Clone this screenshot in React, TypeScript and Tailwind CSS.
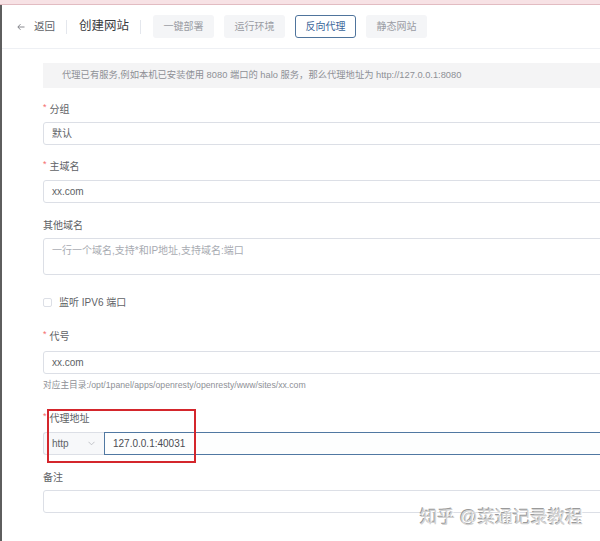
import React from 'react';

const FONT = '"Liberation Sans", "Noto Sans CJK SC", sans-serif';

const Label = ({ text, required, className = '' }: { text: string; required?: boolean; className?: string }) => (
    <div className={`h-[20px] flex items-center text-[10px] text-[#606266] ${className}`}>
        {required && <span className="text-[#f56c6c] text-[9px] mr-[3px] -mt-[2px]">*</span>}
        <span>{text}</span>
    </div>
);

const TextInput = ({ value, className = '' }: { value?: string; className?: string }) => (
    <div className={`h-[23px] w-[600px] border border-[#dcdfe6] rounded-[3px] flex items-center pl-[8px] text-[10px] text-[#606266] ${className}`}>
        {value}
    </div>
);

const TabButton = ({ text, active }: { text: string; active?: boolean }) => (
    <div
        className={`h-[23px] w-[61px] rounded-[3px] flex items-center justify-center text-[10px] ${
            active ? 'border border-[#4f749c] text-[#3a659a] bg-white' : 'bg-[#f4f5f7] text-[#9a9ca3]'
        }`}
    >
        {text}
    </div>
);

export default function App() {
    return (
        <div className="relative w-[600px] h-[541px] overflow-hidden bg-white flex flex-col" style={{ fontFamily: FONT }}>
            {/* browser top strip */}
            <div className="h-[5px] bg-[#f7e2e5] border-b border-[#e2bcc2] shrink-0" />

            <div className="flex flex-1">
                <div className="w-[2px] bg-[#5e5e5e] shrink-0" />

                <div className="flex-1 flex flex-col">
                    {/* header */}
                    <div className="h-[44px] flex items-center border-b border-[#eef0f4] pl-[15px]">
                        <svg width="8" height="8" viewBox="0 0 8 8" className="text-[#7a7c82]">
                            <path d="M7.5 4H1M3.5 1.2L0.8 4L3.5 6.8" stroke="currentColor" strokeWidth="0.9" fill="none" />
                        </svg>
                        <span className="ml-[9px] text-[10.5px] text-[#606266]">返回</span>
                        <div className="ml-[11px] w-px h-[14px] bg-[#e4e7ed]" />
                        <span className="ml-[12px] text-[12.5px] text-[#3a3b3f]">创建网站</span>
                        <div className="ml-[11px] w-px h-[14px] bg-[#e4e7ed]" />
                        <div className="ml-[12px] flex gap-[10px]">
                            <TabButton text="一键部署" />
                            <TabButton text="运行环境" />
                            <TabButton text="反向代理" active />
                            <TabButton text="静态网站" />
                        </div>
                    </div>

                    {/* form */}
                    <div className="pl-[41px] flex flex-col">
                        <div className="mt-[14px] h-[25px] w-[600px] bg-[#f4f4f5] flex items-center pl-[19px] text-[9.3px] text-[#8e9096]">
                            代理已有服务,例如本机已安装使用 8080 端口的 halo 服务，那么代理地址为 http://127.0.0.1:8080
                        </div>

                        <Label text="分组" required className="mt-[11px]" />
                        <TextInput value="默认" className="mt-[3px]" />

                        <Label text="主域名" required className="mt-[11px]" />
                        <TextInput value="xx.com" className="mt-[4px]" />

                        <Label text="其他域名" className="mt-[12px]" />
                        <div className="mt-[3px] h-[37px] w-[600px] border border-[#dcdfe6] rounded-[3px] pl-[8px] pt-[4px] text-[10px] text-[#a8abb2]">
                            一行一个域名,支持*和IP地址,支持域名:端口
                        </div>

                        <div className="mt-[17px] h-[20px] flex items-center">
                            <div className="w-[9px] h-[9px] border border-[#dcdfe6] rounded-[2px]" />
                            <span className="ml-[7px] text-[10px] text-[#606266]">监听 IPV6 端口</span>
                        </div>

                        <Label text="代号" required className="mt-[14px]" />
                        <TextInput value="xx.com" className="mt-[5px]" />
                        <div className="mt-[6px] h-[12px] flex items-center text-[8.7px] text-[#8e9096]">
                            对应主目录:/opt/1panel/apps/openresty/openresty/www/sites/xx.com
                        </div>

                        <Label text="代理地址" required className="mt-[16px]" />
                        <div className="mt-[4px] h-[23px] w-[600px] flex">
                            <div className="w-[61px] h-full border border-[#dcdfe6] border-r-0 rounded-l-[3px] bg-[#f7f8fa] flex items-center pl-[8px] text-[10px] text-[#606266]">
                                <span>http</span>
                                <svg width="7" height="5" viewBox="0 0 7 5" className="ml-[19px] text-[#b5b7bd]">
                                    <path d="M0.5 0.8L3.5 3.8L6.5 0.8" stroke="currentColor" strokeWidth="0.8" fill="none" />
                                </svg>
                            </div>
                            <div className="flex-1 h-full border border-[#5078a2] bg-[#fdfefe] flex items-center pl-[8px] text-[10px] text-[#4a4c52]">
                                127.0.0.1:40031
                            </div>
                        </div>

                        <Label text="备注" className="mt-[12px]" />
                        <TextInput className="mt-[3px]" />
                    </div>
                </div>
            </div>

            {/* annotation box */}
            <div className="absolute left-[47px] top-[409px] w-[149px] h-[54px] border-2 border-[#d4262c]" />

            {/* watermark */}
            <div
                className="absolute left-[420px] top-[504px] text-[17.5px] text-[#d2d2d2] whitespace-nowrap"
                style={{ textShadow: '1px 1px 0 #ffffff, -1px -1px 0 #9a9a9a' }}
            >
                知乎 @菜通记录教程
            </div>
        </div>
    );
}
